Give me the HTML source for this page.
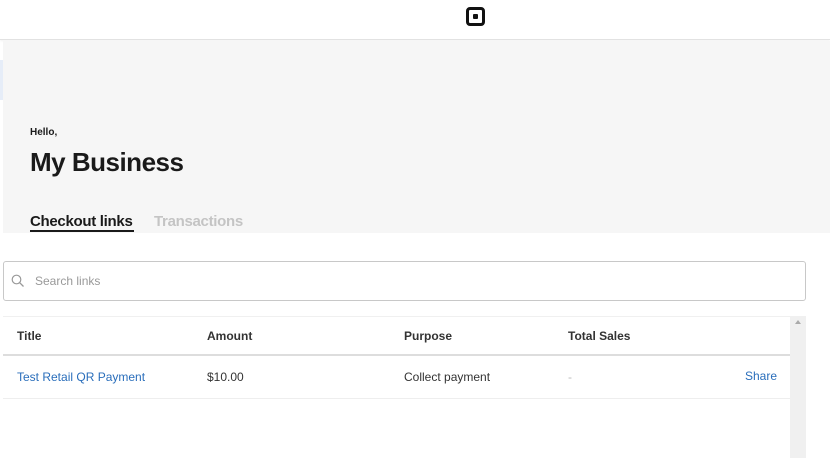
<!DOCTYPE html>
<html><head><style>
*{margin:0;padding:0;box-sizing:border-box}
body{width:830px;height:458px;background:#fff;font-family:"Liberation Sans",sans-serif;position:relative;overflow:hidden;color:#1a1a1a}
.a{position:absolute}
</style></head><body>
<div class="a" style="left:0;top:0;width:830px;height:40px;background:#fff;border-bottom:1px solid #e2e2e2;box-shadow:0 1px 2px rgba(0,0,0,.06)"></div>
<div class="a" style="left:466px;top:7px;width:19px;height:19px;border:3px solid #111;border-radius:4px"></div>
<div class="a" style="left:473px;top:14px;width:5px;height:5px;background:#111;border-radius:1px"></div>
<div class="a" style="left:3px;top:41px;width:827px;height:192px;background:#f6f6f6"></div>
<div class="a" style="left:0;top:60px;width:3px;height:40px;background:#e6edf8"></div>
<div class="a" style="left:30px;top:127px;font-size:10px;font-weight:bold">Hello,</div>
<div class="a" style="left:30px;top:147px;font-size:26px;font-weight:bold;letter-spacing:-.5px">My Business</div>
<div class="a" style="left:30px;top:213px;font-size:15px;font-weight:bold;letter-spacing:-.3px">Checkout links</div>
<div class="a" style="left:30px;top:230px;width:104px;height:2px;background:#1a1a1a"></div>
<div class="a" style="left:154px;top:213px;font-size:15px;font-weight:bold;color:#c4c4c4;letter-spacing:-.3px">Transactions</div>
<div class="a" style="left:3px;top:261px;width:803px;height:40px;border:1px solid #c8c8c8;border-radius:3px"></div>
<svg class="a" style="left:11px;top:274px" width="14" height="14" viewBox="0 0 14 14"><circle cx="5.5" cy="5.5" r="4.3" fill="none" stroke="#999" stroke-width="1.2"/><path d="M8.7 8.7L12.5 12.5" stroke="#999" stroke-width="1.3"/></svg>
<div class="a" style="left:35px;top:274px;font-size:12px;color:#999">Search links</div>
<div class="a" style="left:3px;top:316px;width:787px;height:1px;background:#f0f0f0"></div>
<div class="a" style="left:3px;top:354px;width:787px;height:2px;background:#ddd"></div>
<div class="a" style="left:3px;top:398px;width:787px;height:1px;background:#eee"></div>
<div class="a" style="left:790px;top:316px;width:16px;height:142px;background:#f0f0f0"></div>
<div class="a" style="left:795px;top:320px;width:0;height:0;border-left:3px solid transparent;border-right:3px solid transparent;border-bottom:4px solid #aaa"></div>
<div class="a" style="top:329px;left:17px;font-size:12px;font-weight:bold;color:#333">Title</div>
<div class="a" style="top:329px;left:207px;font-size:12px;font-weight:bold;color:#333">Amount</div>
<div class="a" style="top:329px;left:404px;font-size:12px;font-weight:bold;color:#333">Purpose</div>
<div class="a" style="top:329px;left:568px;font-size:12px;font-weight:bold;color:#333">Total Sales</div>
<div class="a" style="top:370px;left:17px;font-size:12px;color:#2a6ebb">Test Retail QR Payment</div>
<div class="a" style="top:370px;left:207px;font-size:12px;color:#333">$10.00</div>
<div class="a" style="top:370px;left:404px;font-size:12px;color:#333">Collect payment</div>
<div class="a" style="top:370px;left:568px;font-size:12px;color:#bbb">-</div>
<div class="a" style="top:369px;left:745px;font-size:12px;color:#2a6ebb">Share</div>
</body></html>
